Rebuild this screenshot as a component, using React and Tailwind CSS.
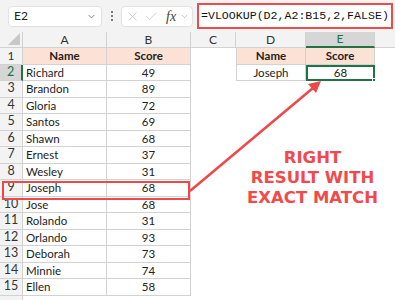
import { ChevronDown, X, Check } from "lucide-react";

const names = [
    ["Richard", 49],
    ["Brandon", 89],
    ["Gloria", 72],
    ["Santos", 69],
    ["Shawn", 68],
    ["Ernest", 37],
    ["Wesley", 31],
    ["Joseph", 68],
    ["Jose", 68],
    ["Rolando", 31],
    ["Orlando", 93],
    ["Deborah", 73],
    ["Minnie", 74],
    ["Ellen", 58],
];

const cell = "h-[16.5px] flex items-center border-r border-b border-[#d2d2d2] text-[11.5px] text-[#222]";

const App = () => {
    return (
        <div className="w-[395px] h-[300px] overflow-hidden bg-white relative" style={{ fontFamily: "Lato, 'Liberation Sans', sans-serif" }}>
            {/* formula bar */}
            <div className="h-[32px] bg-[#f3f3f3] flex items-center pl-[8px]">
                <div className="w-[94px] h-[21px] bg-white rounded-[4px] border border-[#e2e2e2] flex items-center justify-between pl-[5px] pr-[4px]">
                    <span className="text-[12px] text-[#222]">E2</span>
                    <ChevronDown size={11} strokeWidth={1.5} className="text-[#555]" />
                </div>
                <div className="w-[19px] flex flex-col items-center gap-[2px]">
                    <span className="w-[2px] h-[2px] bg-[#555] rounded-full" />
                    <span className="w-[2px] h-[2px] bg-[#555] rounded-full" />
                    <span className="w-[2px] h-[2px] bg-[#555] rounded-full" />
                </div>
                <div className="w-[72px] h-[21px] bg-white rounded-[4px] border border-[#e2e2e2] flex items-center pl-[3px] gap-[4px]">
                    <X size={15} strokeWidth={1} className="text-[#b5b5b5]" />
                    <Check size={15} strokeWidth={1} className="text-[#b5b5b5]" />
                    <span className="ml-[3px] text-[14px] italic text-[#444]" style={{ fontFamily: "'Liberation Serif', serif" }}>fx</span>
                    <ChevronDown size={9} strokeWidth={1.5} className="text-[#999]" />
                </div>
                <div className="ml-[4px] w-[196px] h-[26px] bg-white border-2 border-[#ee4b4b] flex items-center pl-[2px]">
                    <span className="text-[11.6px] text-[#111]" style={{ fontFamily: "'Liberation Mono', monospace" }}>=VLOOKUP(D2,A2:B15,2,FALSE)</span>
                </div>
            </div>

            {/* sheet */}
            <div className="grid grid-cols-[23px_84px_84px_45px_70px_69px_20px] text-[#333]">
                {/* column headers */}
                <div className="h-[16px] bg-[#f3f3f3] border-r border-b border-[#d2d2d2] relative">
                    <div className="absolute right-[2px] bottom-[2px] w-0 h-0 border-l-[12px] border-l-transparent border-b-[12px] border-b-[#c8c8c8]" />
                </div>
                {["A", "B", "C", "D"].map((c) => (
                    <div key={c} className="h-[16px] bg-[#f3f3f3] border-r border-b border-[#d2d2d2] flex items-center justify-center text-[12px]">{c}</div>
                ))}
                <div className="h-[16px] bg-[#d6d6d6] border-r border-[#d2d2d2] border-b-2 border-b-[#217346] flex items-center justify-center text-[12px] text-[#217346]">E</div>
                <div className="h-[16px] bg-[#f3f3f3] border-b border-[#d2d2d2]" />

                {/* row 1 */}
                <div className="h-[16.5px] bg-[#f3f3f3] border-r border-b border-[#d2d2d2] flex items-center justify-center text-[12px]">1</div>
                <div className={`${cell} justify-center bg-[#fbe2d5] font-bold`}>Name</div>
                <div className={`${cell} justify-center bg-[#fbe2d5] font-bold`}>Score</div>
                <div className="h-[16.5px]" />
                <div className={`${cell} justify-center bg-[#fbe2d5] font-bold border-l`}>Name</div>
                <div className={`${cell} justify-center bg-[#fbe2d5] font-bold`}>Score</div>
                <div className="h-[16.5px]" />

                {names.map(([n, s], i) => (
                    <div key={n} className="contents">
                        <div className={`h-[16.5px] border-b border-[#d2d2d2] flex items-center justify-center text-[12.5px] ${i === 0 ? "bg-[#d6d6d6] border-r-2 border-r-[#217346] text-[#217346]" : "bg-[#f3f3f3] border-r"}`}>{i + 2}</div>
                        <div className={`${cell} pl-[3px]`}>{n}</div>
                        <div className={`${cell} justify-center`}>{s}</div>
                        <div className="h-[16.5px]" />
                        {i === 0 ? (
                            <>
                                <div className={`${cell} justify-center border-l`}>Joseph</div>
                                <div className="h-[16.5px] flex items-center justify-center text-[11.5px] text-[#222] border-2 border-[#217346] relative">
                                    68
                                    <span className="absolute right-[-3px] bottom-[-3px] w-[4px] h-[4px] bg-[#217346] border border-white" />
                                </div>
                            </>
                        ) : (
                            <>
                                <div className="h-[16.5px]" />
                                <div className="h-[16.5px]" />
                            </>
                        )}
                        <div className="h-[16.5px]" />
                    </div>
                ))}
                <div className="h-[16.5px] bg-[#f3f3f3] border-r border-[#d2d2d2]" />
            </div>

            {/* annotations */}
            <div className="absolute left-[2px] top-[181px] w-[188px] h-[19px] border-2 border-[#f04848]" />
            <svg className="absolute left-0 top-0" width="395" height="300" viewBox="0 0 395 300">
                <line x1="190" y1="191" x2="313" y2="88" stroke="#f04848" strokeWidth="2.5" />
                <polygon points="321,81 316,93 308,84" fill="#f04848" />
            </svg>
            <div className="absolute left-[240px] top-[148px] w-[145px] text-center text-[16.5px] leading-[20px] font-bold text-[#f24a4a]" style={{ fontFamily: "'DejaVu Sans', sans-serif" }}>
                RIGHT<br />RESULT WITH<br />EXACT MATCH
            </div>
        </div>
    );
};

export default App;
